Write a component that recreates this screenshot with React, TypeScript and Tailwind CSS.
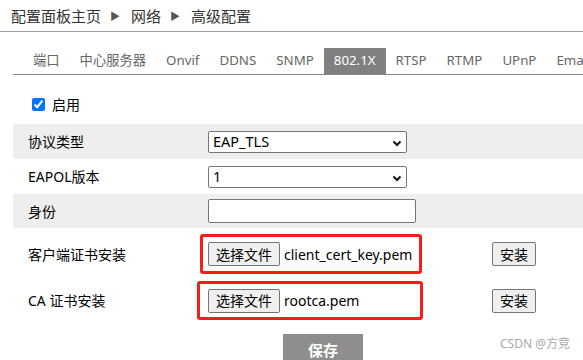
import React from "react";

const font = { fontFamily: '"Noto Sans", "Noto Sans CJK SC", sans-serif' };

function Chevron() {
  return (
    <svg width="10" height="7" viewBox="0 0 10 7" className="absolute right-[4px] top-[8px]">
      <path d="M1.5 1.5 L5 5 L8.5 1.5" fill="none" stroke="#111" strokeWidth="2" />
    </svg>
  );
}

function Select({ value }: { value: string }) {
  return (
    <div className="relative w-[199px] h-[22px] border border-[#767676] rounded-[2px] bg-white flex items-center pl-[4px] text-[14.5px] text-black leading-none">
      {value}
      <Chevron />
    </div>
  );
}

function FileBox({ name, pad }: { name: string; pad: string }) {
  return (
    <div className={`flex items-center border-[3px] border-[#ff1a1a] rounded-[3px] ${pad}`}>
      <div className="h-[24px] w-[72px] shrink-0 border border-[#767676] rounded-[2px] bg-[#efefef] flex items-center justify-center text-[14px] text-black">
        选择文件
      </div>
      <span className="ml-[4px] text-[14px] text-black whitespace-nowrap">{name}</span>
    </div>
  );
}

function InstallBtn() {
  return (
    <div className="h-[24px] w-[44px] border border-[#767676] rounded-[2px] bg-[#efefef] flex items-center justify-center text-[14px] text-black">
      安装
    </div>
  );
}

export default function App() {
  const tabs = ["端口", "中心服务器", "Onvif", "DDNS", "SNMP", "802.1X", "RTSP", "RTMP", "UPnP", "Email"];
  return (
    <div className="w-[583px] h-[360px] overflow-hidden bg-white relative" style={font}>
      <div className="h-[32px] border-b border-[#a0a0a0] flex items-center pl-[11px] text-[15px] text-[#333] pt-[2px]">
        <span>配置面板主页</span>
        <span className="text-[10px] text-[#555] ml-[9px] mr-[11px]">▶</span>
        <span>网络</span>
        <span className="text-[10px] text-[#555] ml-[9px] mr-[11px]">▶</span>
        <span>高级配置</span>
      </div>
      <div className="ml-[13px] mt-[16px] w-[700px] h-[27px] border-b border-[#888] flex pl-[10px] text-[13.3px] text-[#666]">
        {tabs.map((t) => (
          <div
            key={t}
            className={`h-[26px] px-[10px] flex items-center whitespace-nowrap ${t === "802.1X" ? "bg-[#808080] text-white" : ""}`}
          >
            {t}
          </div>
        ))}
      </div>
      <div className="flex items-center ml-[32px] mt-[23px] h-[13px] gap-[7px]">
        <input type="checkbox" defaultChecked className="w-[13px] h-[13px] m-0 accent-[#0075ff]" />
        <span className="text-[14px] text-black">启用</span>
      </div>
      <div className="ml-[13px] mt-[13px] w-[700px] text-[14px] text-black">
        <div className="h-[35px] bg-[#eeeeee] flex items-center">
          <div className="w-[195px] pl-[15px]">协议类型</div>
          <Select value="EAP_TLS" />
        </div>
        <div className="h-[35px] flex items-center">
          <div className="w-[195px] pl-[15px]">EAPOL版本</div>
          <Select value="1" />
        </div>
        <div className="h-[34px] bg-[#eeeeee] flex items-center">
          <div className="w-[195px] pl-[15px]">身份</div>
          <div className="w-[208px] h-[24px] border border-[#767676] rounded-[2px] bg-white" />
        </div>
        <div className="h-[52px] flex items-center">
          <div className="w-[187px] pl-[15px]">客户端证书安装</div>
          <div className="w-[292px]">
            <FileBox name="client_cert_key.pem" pad="w-[222px] h-[40px] pl-[5px]" />
          </div>
          <InstallBtn />
        </div>
        <div className="h-[41px] flex items-center">
          <div className="w-[184px] pl-[15px]">CA 证书安装</div>
          <div className="w-[295px]">
            <FileBox name="rootca.pem" pad="w-[226px] h-[39px] pl-[8px]" />
          </div>
          <InstallBtn />
        </div>
      </div>
      <div className="ml-[283px] mt-[13px] w-[80px] h-[32px] bg-[#8e8e8e] text-white text-[15px] font-semibold flex items-center justify-center">
        保存
      </div>
      <div className="absolute left-[500px] top-[335px] text-[12px] text-[#a8a8a8]">CSDN @方竞</div>
    </div>
  );
}
